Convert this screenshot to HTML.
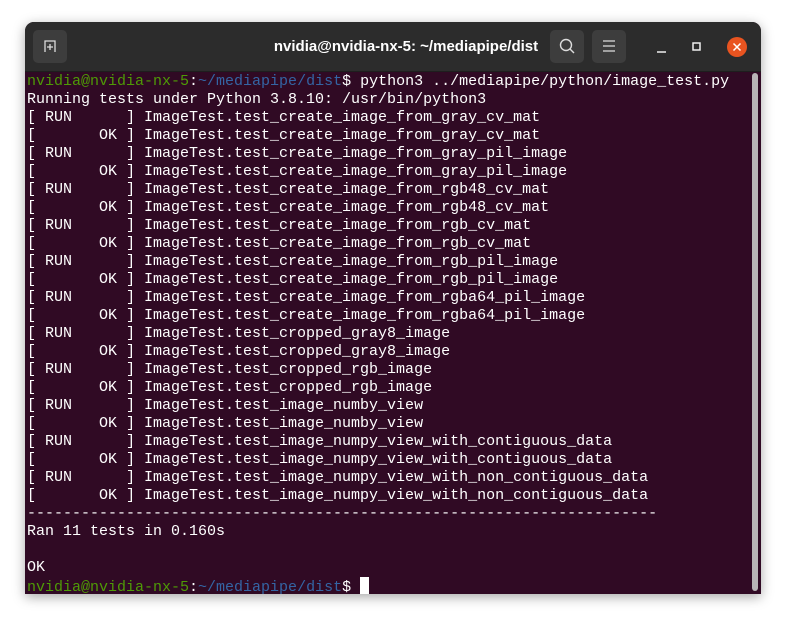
<!DOCTYPE html>
<html><head><meta charset="utf-8"><style>
body{margin:0;width:786px;height:623px;background:#fff;position:relative;overflow:hidden}
.win{position:absolute;left:25px;top:22px;width:736px;height:572px;border-radius:9px 9px 0 0;overflow:hidden;background:#300a24;box-shadow:0 3px 12px rgba(0,0,0,.35)}
.hdr{position:absolute;left:0;top:0;width:736px;height:49px;background:#2c2c2c;border-bottom:1px solid #1e1e1e}
.btn{position:absolute;top:8px;width:34px;height:33px;background:#3d3d3d;border-radius:5px}
.title{position:absolute;left:0;width:736px;top:16px;text-align:center;color:#fff;font:bold 15px "Liberation Sans",sans-serif;padding-left:26px;box-sizing:border-box}
pre{position:absolute;left:2px;top:51px;margin:0;font:15px/18px "Liberation Mono",monospace;color:#fff;white-space:pre}
.g{color:#4e9a06}.b{color:#3465a4}
.cur{display:inline-block;width:9px;height:17px;background:#fff;vertical-align:-3px}
.sb{position:absolute;left:727px;top:51px;width:6px;height:518px;background:#b8b4b6;border-radius:3px}
</style></head><body>
<div class="win">
<div class="hdr">
<div class="btn" style="left:8px"><svg width="34" height="33"><path d="M12 22V11h10v11M17 14v6M14 17h6" stroke="#ddd" stroke-width="1.3" fill="none"/></svg></div>
<div class="title">nvidia@nvidia-nx-5: ~/mediapipe/dist</div>
<div class="btn" style="left:525px"><svg width="34" height="33"><circle cx="16" cy="15" r="5.5" stroke="#ddd" stroke-width="1.4" fill="none"/><path d="M20 19l4 4" stroke="#ddd" stroke-width="1.4"/></svg></div>
<div class="btn" style="left:567px"><svg width="34" height="33"><path d="M11 11h12M11 16h12M11 21h12" stroke="#ddd" stroke-width="1.3"/></svg></div>
<svg style="position:absolute;left:620px;top:10px" width="110" height="30"><path d="M12 20h9" stroke="#eee" stroke-width="1.5"/><rect x="48" y="11" width="7" height="7" stroke="#eee" stroke-width="1.5" fill="none"/><circle cx="92" cy="15" r="10" fill="#e95420"/><path d="M88.5 11.5l7 7M95.5 11.5l-7 7" stroke="#fff" stroke-width="1.5"/></svg>
</div>
<div class="sb"></div>
<pre><span class="g">nvidia@nvidia-nx-5</span>:<span class="b">~/mediapipe/dist</span>$ python3 ../mediapipe/python/image_test.py
Running tests under Python 3.8.10: /usr/bin/python3
[ RUN      ] ImageTest.test_create_image_from_gray_cv_mat
[       OK ] ImageTest.test_create_image_from_gray_cv_mat
[ RUN      ] ImageTest.test_create_image_from_gray_pil_image
[       OK ] ImageTest.test_create_image_from_gray_pil_image
[ RUN      ] ImageTest.test_create_image_from_rgb48_cv_mat
[       OK ] ImageTest.test_create_image_from_rgb48_cv_mat
[ RUN      ] ImageTest.test_create_image_from_rgb_cv_mat
[       OK ] ImageTest.test_create_image_from_rgb_cv_mat
[ RUN      ] ImageTest.test_create_image_from_rgb_pil_image
[       OK ] ImageTest.test_create_image_from_rgb_pil_image
[ RUN      ] ImageTest.test_create_image_from_rgba64_pil_image
[       OK ] ImageTest.test_create_image_from_rgba64_pil_image
[ RUN      ] ImageTest.test_cropped_gray8_image
[       OK ] ImageTest.test_cropped_gray8_image
[ RUN      ] ImageTest.test_cropped_rgb_image
[       OK ] ImageTest.test_cropped_rgb_image
[ RUN      ] ImageTest.test_image_numby_view
[       OK ] ImageTest.test_image_numby_view
[ RUN      ] ImageTest.test_image_numpy_view_with_contiguous_data
[       OK ] ImageTest.test_image_numpy_view_with_contiguous_data
[ RUN      ] ImageTest.test_image_numpy_view_with_non_contiguous_data
[       OK ] ImageTest.test_image_numpy_view_with_non_contiguous_data
----------------------------------------------------------------------
Ran 11 tests in 0.160s

OK
<span class="g">nvidia@nvidia-nx-5</span>:<span class="b">~/mediapipe/dist</span>$ <span class="cur"></span></pre>
</div>
</body></html>
